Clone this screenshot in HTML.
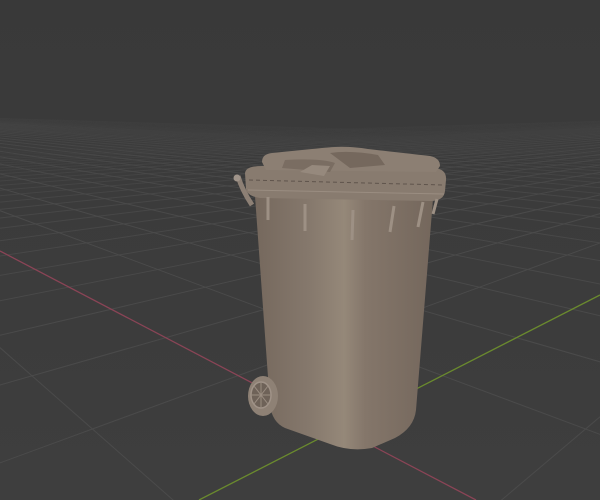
<!DOCTYPE html>
<html><head><style>
html,body{margin:0;padding:0;background:#3a3a3a;overflow:hidden;width:600px;height:500px}
svg{display:block}
</style></head><body>
<svg id="s" width="600" height="500" viewBox="0 0 600 500" xmlns="http://www.w3.org/2000/svg">
<defs>
<linearGradient id="body" x1="0" x2="1" y1="0" y2="0">
<stop offset="0" stop-color="#75685d"/>
<stop offset="0.3" stop-color="#85786c"/>
<stop offset="0.5" stop-color="#958879"/>
<stop offset="0.62" stop-color="#84766a"/>
<stop offset="1" stop-color="#74675c"/>
</linearGradient>
<linearGradient id="bg" x1="0" x2="0" y1="0" y2="1">
<stop offset="0" stop-color="#393939"/>
<stop offset="1" stop-color="#3e3e3e"/>
</linearGradient>
<clipPath id="c"><rect width="600" height="500"/></clipPath>
</defs>
<rect width="600" height="500" fill="url(#bg)"/>
<g id="grid" stroke="#4b4b4b" stroke-width="1" fill="none" clip-path="url(#c)"></g>
<path d="M0 251 L476 500" stroke="#8a4456" stroke-width="1.3"/>
<path d="M199 500 L600 295" stroke="#6a8a2e" stroke-width="1.3"/>
<!-- handle -->
<path d="M238 176 Q242 190 252 205" stroke="#8d8075" stroke-width="5" fill="none"/>
<circle cx="237" cy="178" r="3.5" fill="#a0948a"/>
<!-- body -->
<path d="M255 196 L433 199 L416 410 Q414 428 395 438 L372 448 Q350 452 330 444 L285 428 Q272 422 270 405 Z" fill="url(#body)"/>
<!-- rim -->
<path d="M245 173 Q246 166 262 166 L434 168 Q447 169 446 180 L445 191 Q444 201 430 201 L260 198 Q247 196 246 189 Z" fill="#887b6f"/>
<path d="M249 180 L444 185" stroke="#5f544c" stroke-width="1" stroke-dasharray="4 3"/>
<path d="M248 190 L444 194" stroke="#9a8d81" stroke-width="1"/>
<!-- lid -->
<path d="M262 162 Q262 154 272 153 L322 148 Q345 145 368 149 L430 156 Q440 158 440 166 L436 172 L266 170 Z" fill="#8c7f73"/>
<path d="M285 160 Q320 158 335 163 L330 172 L282 168 Z" fill="#7a6d62"/>
<path d="M330 153 Q350 150 378 155 L385 165 L350 168 Z" fill="#75685d"/>
<path d="M300 172 L312 165 L330 166 L324 176 Z" fill="#96897d"/>
<!-- ribs -->
<g stroke="#9d9084" stroke-width="3">
<path d="M268 197 L268 220"/><path d="M305 204 L305 231"/><path d="M353 210 L352 240"/>
<path d="M394 206 L390 232"/><path d="M423 202 L418 227"/><path d="M437 199 L433 214"/>
</g>
<!-- wheel -->
<ellipse cx="263" cy="396" rx="15" ry="20" fill="#8e8175"/>
<ellipse cx="261" cy="395" rx="10" ry="13" fill="#6e6258" stroke="#a09388" stroke-width="1.5"/>
<g stroke="#9a8d81" stroke-width="1">
<path d="M251 395 H271"/><path d="M261 382 V408"/><path d="M254 386 L268 404"/><path d="M268 386 L254 404"/>
</g>
</svg>
<script>
(function(){
var g=document.getElementById('grid');
var O=[339,429],V1=[-270,110],V2=[963,110],k=5;
function pt(V,t){var f=t/(t+k);return [O[0]+(V[0]-O[0])*f,O[1]+(V[1]-O[1])*f];}
function line(a,b,op){var l=document.createElementNS('http://www.w3.org/2000/svg','line');
l.setAttribute('x1',a[0]);l.setAttribute('y1',a[1]);l.setAttribute('x2',b[0]);l.setAttribute('y2',b[1]);
l.setAttribute('stroke-opacity',op);g.appendChild(l);}
function ext(p,V,back){var dx=p[0]-V[0],dy=p[1]-V[1];return [V[0]+dx*back,V[1]+dy*back];}
for(var t=-4;t<=40;t++){
 if(t===0)continue;
 var op=Math.max(0.1,1-Math.abs(t)/35);
 var p=pt(V1,t); line(V2,ext(p,V2,6),op);
 var q=pt(V2,t); line(V1,ext(q,V1,6),op);
}
})();
</script>
</body></html>
